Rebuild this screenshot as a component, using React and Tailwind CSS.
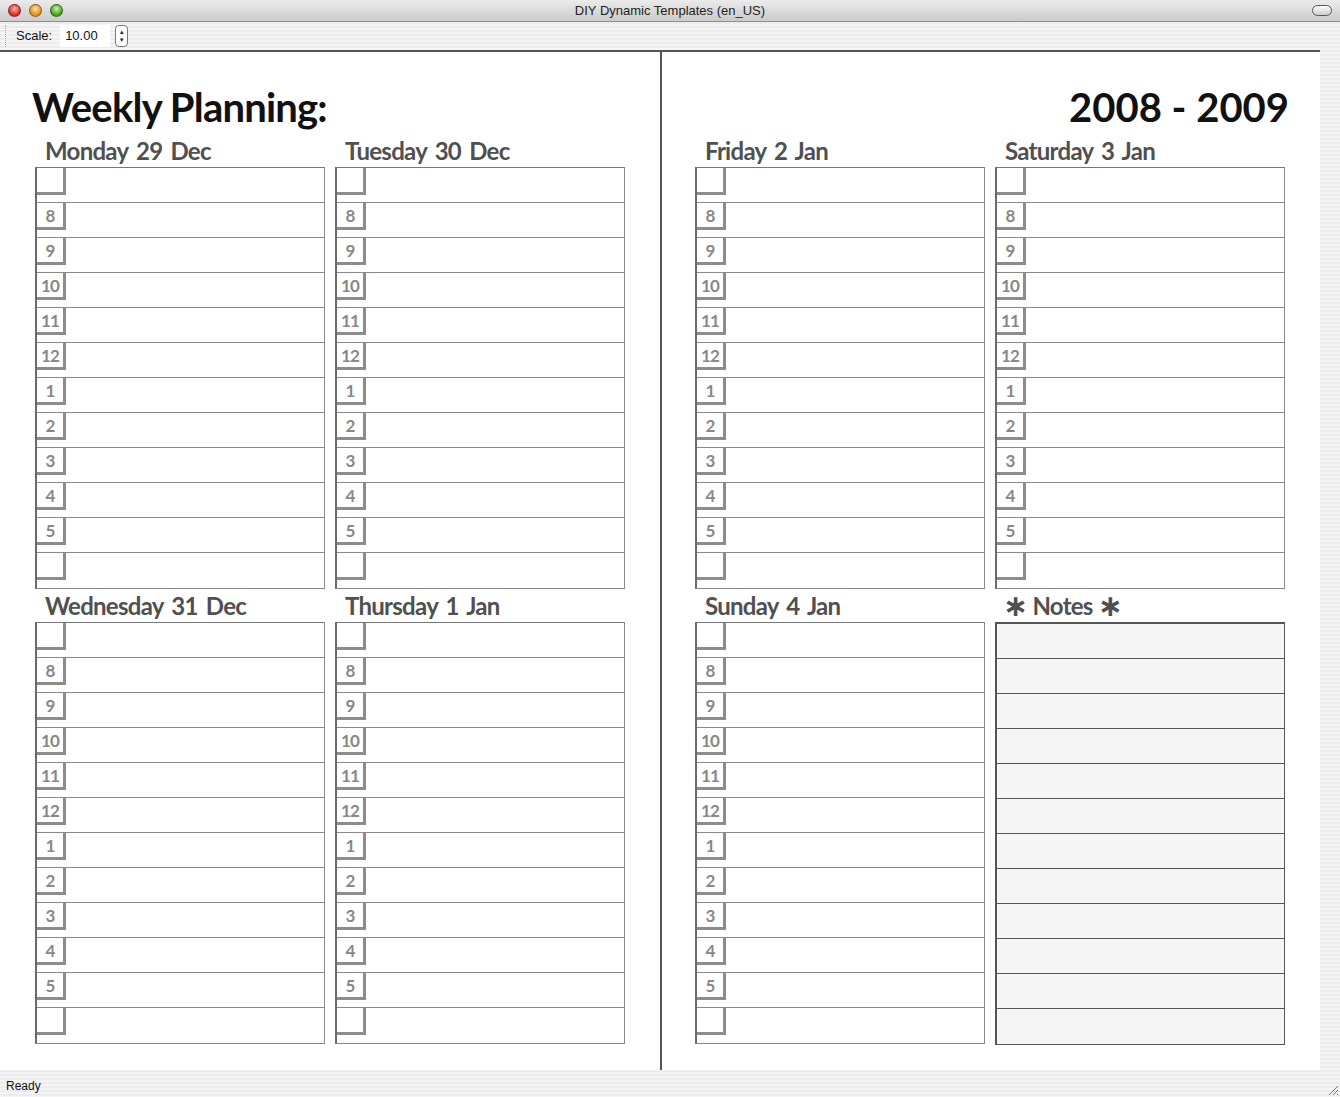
import React from 'react';

const HOURS = ['', '8', '9', '10', '11', '12', '1', '2', '3', '4', '5', ''];
const stripes =
  'bg-[repeating-linear-gradient(180deg,#ececec_0px,#ececec_2px,#f5f5f5_2px,#f5f5f5_4px)]';

const Light = ({ color }) => (
  <span
    className={`block h-[13px] w-[13px] rounded-full border border-black/40 ${color}`}
  />
);

const DayBlock = ({ title }) => (
  <div>
    <div className="h-[33px] pl-[10px] text-[24px] font-bold leading-[34px] tracking-[-0.03em] text-[#505050] [word-spacing:3px]">
      {title}
    </div>
    <div className="border-b border-l-2 border-r border-t border-b-[#8a8a8a] border-l-[#6a6a6a] border-r-[#8a8a8a] border-t-[#777]">
      {HOURS.map((h, i) => (
        <div
          key={i}
          className={`flex h-[35px] ${i < 11 ? 'border-b border-[#8a8a8a]' : ''}`}
        >
          <div className="flex h-[27px] w-[29px] items-center justify-center border-b-[3px] border-r-[3px] border-[#8c8c8c] text-[17px] font-bold leading-none tracking-[-0.05em] text-[#888]">
            {h}
          </div>
        </div>
      ))}
    </div>
  </div>
);

const NotesBlock = () => (
  <div>
    <div className="flex h-[33px] items-center gap-[5px] pl-[8px] text-[24px] font-bold leading-[34px] tracking-[-0.03em] text-[#505050]">
      <span className="font-['DejaVu_Sans',sans-serif] text-[30px] leading-none">∗</span>
      <span>Notes</span>
      <span className="font-['DejaVu_Sans',sans-serif] text-[30px] leading-none">∗</span>
    </div>
    <div className="border-b border-l-2 border-r border-t-2 border-[#555] bg-[#f5f5f5]">
      {HOURS.map((h, i) => (
        <div
          key={i}
          className={`h-[35px] ${i < 11 ? 'border-b border-[#555]' : ''}`}
        />
      ))}
    </div>
  </div>
);

const App = () => {
  return (
    <div className="flex h-screen w-full flex-col overflow-hidden font-['Lato',sans-serif]">
      {/* Title bar */}
      <div className="relative flex h-[22px] shrink-0 items-center border-b border-[#8e8e8e] bg-linear-to-b from-[#ebebeb] to-[#cbcbcb]">
        <div className="flex gap-[8px] pl-[8px]">
          <Light color="bg-[radial-gradient(circle_at_50%_35%,#ffb3a8,#d8281a_70%)]" />
          <Light color="bg-[radial-gradient(circle_at_50%_35%,#ffe2a0,#e08a10_70%)]" />
          <Light color="bg-[radial-gradient(circle_at_50%_35%,#c8f5a0,#3c9e1a_70%)]" />
        </div>
        <div className="absolute inset-x-0 text-center font-['Liberation_Sans',sans-serif] text-[13px] text-[#222]">
          DIY Dynamic Templates (en_US)
        </div>
        <div className="absolute right-[8px] top-[5px] h-[11px] w-[20px] rounded-full border border-[#555] bg-linear-to-b from-white to-[#ccc]" />
      </div>

      {/* Toolbar */}
      <div className={`flex h-[28px] shrink-0 items-center font-['Liberation_Sans',sans-serif] text-[13px] text-[#111] ${stripes}`}>
        <div className="ml-[5px] h-[22px] w-[3px] border-l border-dotted border-[#aaa]" />
        <span className="ml-[8px]">Scale:</span>
        <div className="ml-[8px] flex h-[22px] w-[50px] items-center bg-white pl-[5px]">10.00</div>
        <div className="ml-[5px] flex h-[22px] w-[13px] flex-col items-center justify-center rounded-[4px] border border-[#777] bg-white text-[6px] leading-[8px] text-[#222]">
          <span>▲</span>
          <span>▼</span>
        </div>
      </div>

      {/* Content */}
      <div className="flex min-h-0 flex-1">
        <div className="flex w-[1320px] shrink-0 border-t-2 border-[#555] bg-white">
          {/* Left page */}
          <div className="w-[660px] shrink-0 pl-[35px]">
            <div className="-ml-[3px] h-[82px] pt-[32px] text-[40px] font-bold leading-[46px] tracking-[-0.02em] text-[#111]">
              Weekly Planning:
            </div>
            <div className="grid grid-cols-[290px_290px] gap-x-[10px]">
              <DayBlock title="Monday 29 Dec" />
              <DayBlock title="Tuesday 30 Dec" />
              <DayBlock title="Wednesday 31 Dec" />
              <DayBlock title="Thursday 1 Jan" />
            </div>
          </div>
          <div className="w-[2px] shrink-0 bg-[#555]" />
          {/* Right page */}
          <div className="flex-1 pl-[33px] pr-[35px]">
            <div className="-mr-[4px] h-[82px] pt-[32px] text-right text-[40px] font-bold leading-[46px] text-[#111]">
              2008 - 2009
            </div>
            <div className="grid grid-cols-[290px_290px] gap-x-[10px]">
              <DayBlock title="Friday 2 Jan" />
              <DayBlock title="Saturday 3 Jan" />
              <DayBlock title="Sunday 4 Jan" />
              <NotesBlock />
            </div>
          </div>
        </div>
        <div className={`flex-1 ${stripes}`} />
      </div>

      {/* Status bar */}
      <div className={`relative flex h-[27px] shrink-0 items-center pl-[6px] pt-[4px] font-['Liberation_Sans',sans-serif] text-[12px] text-[#111] ${stripes}`}>
        Ready
        <svg className="absolute bottom-[1px] right-[1px]" width="12" height="12" viewBox="0 0 12 12">
          <path d="M11 2 L2 11 M11 6 L6 11 M11 10 L10 11" stroke="#777" strokeWidth="1" />
        </svg>
      </div>
    </div>
  );
};

export default App;
